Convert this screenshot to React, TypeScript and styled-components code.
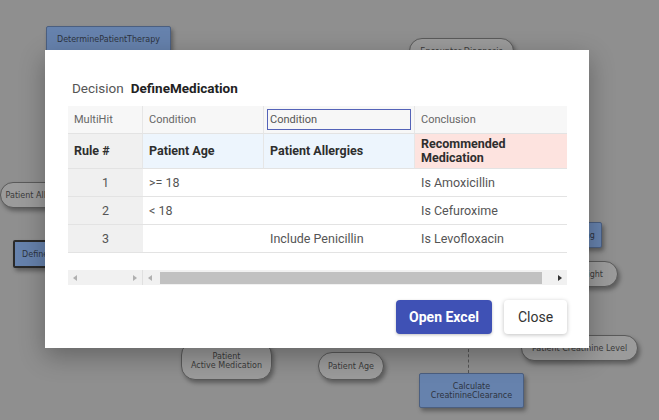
import React from "react";
import styled, { createGlobalStyle, css } from "styled-components";

const GlobalStyle = createGlobalStyle`
  html, body { margin: 0; padding: 0; }
  body { font-family: Roboto, "Liberation Sans", sans-serif; }
`;

const Canvas = styled.div`
  position: relative;
  width: 659px;
  height: 420px;
  overflow: hidden;
  background: #8f8f8f;
`;

interface NodeProps {
  $x: number;
  $y: number;
  $w: number;
  $h: number;
}

const nodeBase = css<NodeProps>`
  position: absolute;
  left: ${(p) => p.$x}px;
  top: ${(p) => p.$y}px;
  width: ${(p) => p.$w}px;
  height: ${(p) => p.$h}px;
  box-sizing: border-box;
  display: flex;
  align-items: center;
  justify-content: center;
  text-align: center;
  font-family: "DejaVu Sans", Verdana, sans-serif;
  font-size: 8px;
  line-height: 9px;
  color: #3a3a3a;
  white-space: nowrap;
  overflow: hidden;
  box-shadow: 2px 3px 4px rgba(0, 0, 0, 0.35);
`;

const Pill = styled.div<NodeProps>`
  ${nodeBase};
  background: #9b9b9b;
  border: 1px solid #5a5a5a;
  border-radius: 14px;
`;

const TaskBox = styled.div<NodeProps & { $dark?: boolean }>`
  ${nodeBase};
  background: #6682ad;
  border: ${(p) => (p.$dark ? "2px solid #2a2a2a" : "1px solid #4b5f80")};
  border-radius: 2px;
  color: #2d3340;
`;

const Dashed = styled.div`
  position: absolute;
  left: 468px;
  top: 349px;
  height: 24px;
  border-left: 1px dashed #555;
`;

const Modal = styled.div`
  position: absolute;
  left: 45px;
  top: 50px;
  width: 544px;
  height: 298px;
  box-sizing: border-box;
  background: #fff;
  padding: 0 22px 14px 23px;
  display: flex;
  flex-direction: column;
  box-shadow: 0 8px 24px rgba(0, 0, 0, 0.3);
`;

const Title = styled.div`
  height: 56px;
  display: flex;
  align-items: flex-end;
  padding: 0 0 10px 4px;
  box-sizing: border-box;
  font-size: 13.5px;
  color: #555;
  gap: 7px;
  b {
    color: #222;
    font-weight: 700;
  }
`;

const Grid = styled.div`
  display: grid;
  grid-template-columns: 75px 121px 151px 152px;
  grid-auto-rows: 28px;
  grid-template-rows: 28px 35px;
`;

type Tone = "head" | "rule" | "cond" | "conc" | "plain";

const tones: Record<Tone, string> = {
  head: "#f7f7f7",
  rule: "#f0f0f0",
  cond: "#edf5fd",
  conc: "#fde3df",
  plain: "#fff",
};

const Cell = styled.div<{
  $tone: Tone;
  $center?: boolean;
  $bold?: boolean;
  $small?: boolean;
  $open?: boolean;
}>`
  background: ${(p) => tones[p.$tone]};
  border-bottom: 1px solid #e3e3e3;
  border-right: ${(p) => (p.$open ? "none" : "1px solid #e6e6e6")};
  box-sizing: border-box;
  display: flex;
  align-items: center;
  justify-content: ${(p) => (p.$center ? "center" : "flex-start")};
  padding: 0 6px;
  font-size: ${(p) => (p.$small ? "11px" : "12.5px")};
  font-weight: ${(p) => (p.$bold ? 700 : 400)};
  color: ${(p) => (p.$bold ? "#2e2e2e" : p.$small ? "#666" : "#555")};
  line-height: 14px;
  &:nth-child(4n) {
    border-right: none;
  }
`;

const EditInput = styled.div`
  flex: 1;
  height: 19px;
  margin: 0 -3px;
  border: 1px solid #5463b8;
  display: flex;
  align-items: center;
  padding-left: 2px;
  font-size: 11px;
  color: #555;
`;

const ScrollRow = styled.div`
  margin-top: 17px;
  display: grid;
  grid-template-columns: 75px 1fr;
  height: 15px;
  background: #f1f1f1;
`;

const ScrollPart = styled.div<{ $first?: boolean }>`
  display: flex;
  align-items: center;
  padding: 0 5px;
  gap: 4px;
  border-right: ${(p) => (p.$first ? "1px solid #e0e0e0" : "none")};
`;

const Arrow = styled.span<{ $dir: "l" | "r"; $dark?: boolean }>`
  width: 0;
  height: 0;
  border-top: 3px solid transparent;
  border-bottom: 3px solid transparent;
  ${(p) =>
    p.$dir === "l"
      ? `border-right: 4px solid ${p.$dark ? "#333" : "#b0b0b0"};`
      : `border-left: 4px solid ${p.$dark ? "#333" : "#b0b0b0"};`}
`;

const Thumb = styled.div`
  flex: 1;
  height: 12px;
  background: #c1c1c1;
  margin: 0 12px 0 4px;
`;

const Spacer = styled.div`
  flex: 1;
`;

const Footer = styled.div`
  margin-top: 15px;
  display: flex;
  justify-content: flex-end;
  gap: 12px;
`;

const Button = styled.button<{ $primary?: boolean }>`
  height: 34px;
  border: none;
  border-radius: 4px;
  font-family: Roboto, "Liberation Sans", sans-serif;
  font-size: 14px;
  cursor: pointer;
  ${(p) =>
    p.$primary
      ? css`
          width: 96px;
          background: #3f51b5;
          color: #fff;
          font-weight: 700;
          box-shadow: 0 1px 3px rgba(0, 0, 0, 0.25);
        `
      : css`
          width: 63px;
          background: #fff;
          color: #333;
          box-shadow: 0 1px 4px rgba(0, 0, 0, 0.25);
        `}
`;

const rules = [
  { n: 1, age: ">= 18", allergy: "", med: "Is Amoxicillin" },
  { n: 2, age: "< 18", allergy: "", med: "Is Cefuroxime" },
  { n: 3, age: "", allergy: "Include Penicillin", med: "Is Levofloxacin" },
];

export default function App() {
  return (
    <>
      <GlobalStyle />
      <Canvas>
        <TaskBox $x={46} $y={26} $w={125} $h={26}>DeterminePatientTherapy</TaskBox>
        <Pill $x={409} $y={38} $w={105} $h={26}>Encounter Diagnosis</Pill>
        <Pill $x={0} $y={182} $w={76} $h={26}>Patient Allergies</Pill>
        <TaskBox $x={13} $y={240} $w={88} $h={28} $dark>DefineMedication</TaskBox>
        <TaskBox $x={560} $y={222} $w={42} $h={26}>Dosing</TaskBox>
        <Pill $x={560} $y={261} $w={58} $h={26}>Weight</Pill>
        <Pill $x={521} $y={335} $w={117} $h={26}>Patient Creatinine Level</Pill>
        <Pill $x={181} $y={341} $w={91} $h={39}>Patient<br />Active Medication</Pill>
        <Pill $x={318} $y={352} $w={66} $h={28}>Patient Age</Pill>
        <Dashed />
        <TaskBox $x={419} $y={373} $w={105} $h={35}>Calculate<br />CreatinineClearance</TaskBox>

        <Modal>
          <Title>
            <span>Decision</span>
            <b>DefineMedication</b>
          </Title>
          <Grid>
            <Cell $tone="head" $small>MultiHit</Cell>
            <Cell $tone="head" $small>Condition</Cell>
            <Cell $tone="head" $small>
              <EditInput>Condition</EditInput>
            </Cell>
            <Cell $tone="head" $small>Conclusion</Cell>

            <Cell $tone="rule" $bold>Rule #</Cell>
            <Cell $tone="cond" $bold>Patient Age</Cell>
            <Cell $tone="cond" $bold>Patient Allergies</Cell>
            <Cell $tone="conc" $bold>Recommended<br />Medication</Cell>

            {rules.map((r) => (
              <React.Fragment key={r.n}>
                <Cell $tone="rule" $center $open>{r.n}</Cell>
                <Cell $tone="plain" $open>{r.age}</Cell>
                <Cell $tone="plain" $open>{r.allergy}</Cell>
                <Cell $tone="plain" $open>{r.med}</Cell>
              </React.Fragment>
            ))}
          </Grid>
          <ScrollRow>
            <ScrollPart $first>
              <Arrow $dir="l" />
              <Spacer />
              <Arrow $dir="r" />
            </ScrollPart>
            <ScrollPart>
              <Arrow $dir="l" />
              <Thumb />
              <Arrow $dir="r" $dark />
            </ScrollPart>
          </ScrollRow>
          <Footer>
            <Button $primary>Open Excel</Button>
            <Button>Close</Button>
          </Footer>
        </Modal>
      </Canvas>
    </>
  );
}
